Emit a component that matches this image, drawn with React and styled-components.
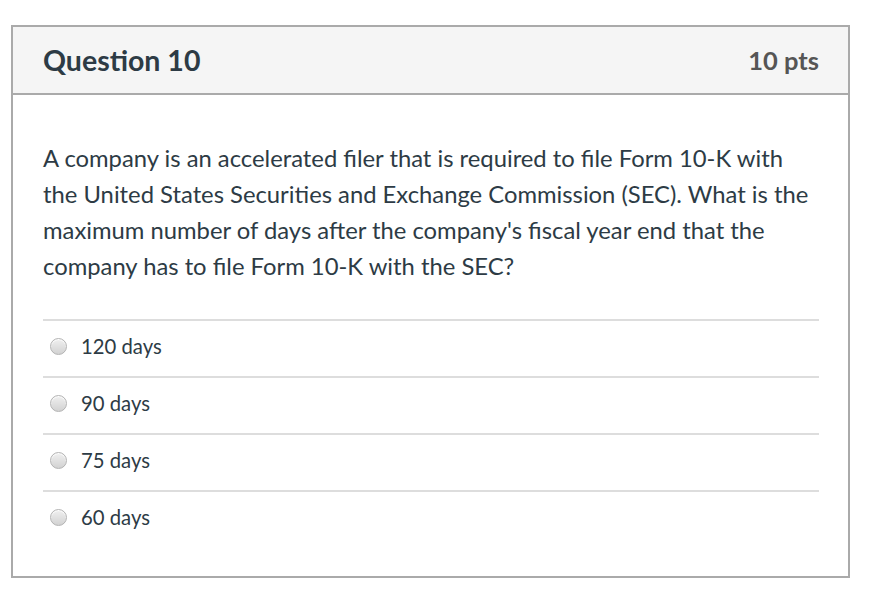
import React from "react";
import styled, { createGlobalStyle } from "styled-components";

const GlobalStyle = createGlobalStyle`
  body {
    margin: 0;
    background: #fff;
    font-family: Lato, "Open Sans", "Liberation Sans", sans-serif;
  }
`;

const Page = styled.div`
  padding: 25px 19px 0 11px;
`;

const Card = styled.div`
  width: 839px;
  box-sizing: border-box;
  border: 2px solid #aaaaaa;
  background: #fff;
`;

const Header = styled.div`
  display: flex;
  align-items: center;
  justify-content: space-between;
  height: 66px;
  padding: 0 29px 0 30px;
  background: #f5f5f5;
  border-bottom: 2px solid #aaaaaa;
`;

const Title = styled.h2`
  margin: 0;
  font-size: 28.5px;
  font-weight: 700;
  color: #2d3b45;
`;

const Points = styled.span`
  font-size: 25.5px;
  font-weight: 700;
  color: #555;
`;

const Body = styled.div`
  padding: 45px 29px 29px 30px;
`;

const Text = styled.p`
  margin: 0 0 35px;
  font-size: 23.8px;
  line-height: 36px;
  color: #2d3b45;
`;

const Answer = styled.label`
  display: flex;
  align-items: center;
  box-sizing: border-box;
  height: 57px;
  padding-bottom: 5px;
  border-top: 2px solid #dddddd;
  font-size: 20.3px;
  color: #2d3b45;
  cursor: pointer;
`;

const Radio = styled.span`
  flex: none;
  width: 15px;
  height: 15px;
  margin: 0 14px 0 7px;
  border-radius: 50%;
  border: 1px solid #b3b3b3;
  background: linear-gradient(#f0f0f0, #d2d2d2);
  box-shadow: inset 0 1px 1px #fff;
`;

const answers = ["120 days", "90 days", "75 days", "60 days"];

export default function App() {
  return (
    <>
      <GlobalStyle />
      <Page>
        <Card>
          <Header>
            <Title>Question 10</Title>
            <Points>10 pts</Points>
          </Header>
          <Body>
            <Text>
              A company is an accelerated filer that is required to file Form
              10-K with the United States Securities and Exchange Commission
              (SEC). What is the maximum number of days after the company's
              fiscal year end that the company has to file Form 10-K with the
              SEC?
            </Text>
            {answers.map((a) => (
              <Answer key={a}>
                <Radio />
                {a}
              </Answer>
            ))}
          </Body>
        </Card>
      </Page>
    </>
  );
}
